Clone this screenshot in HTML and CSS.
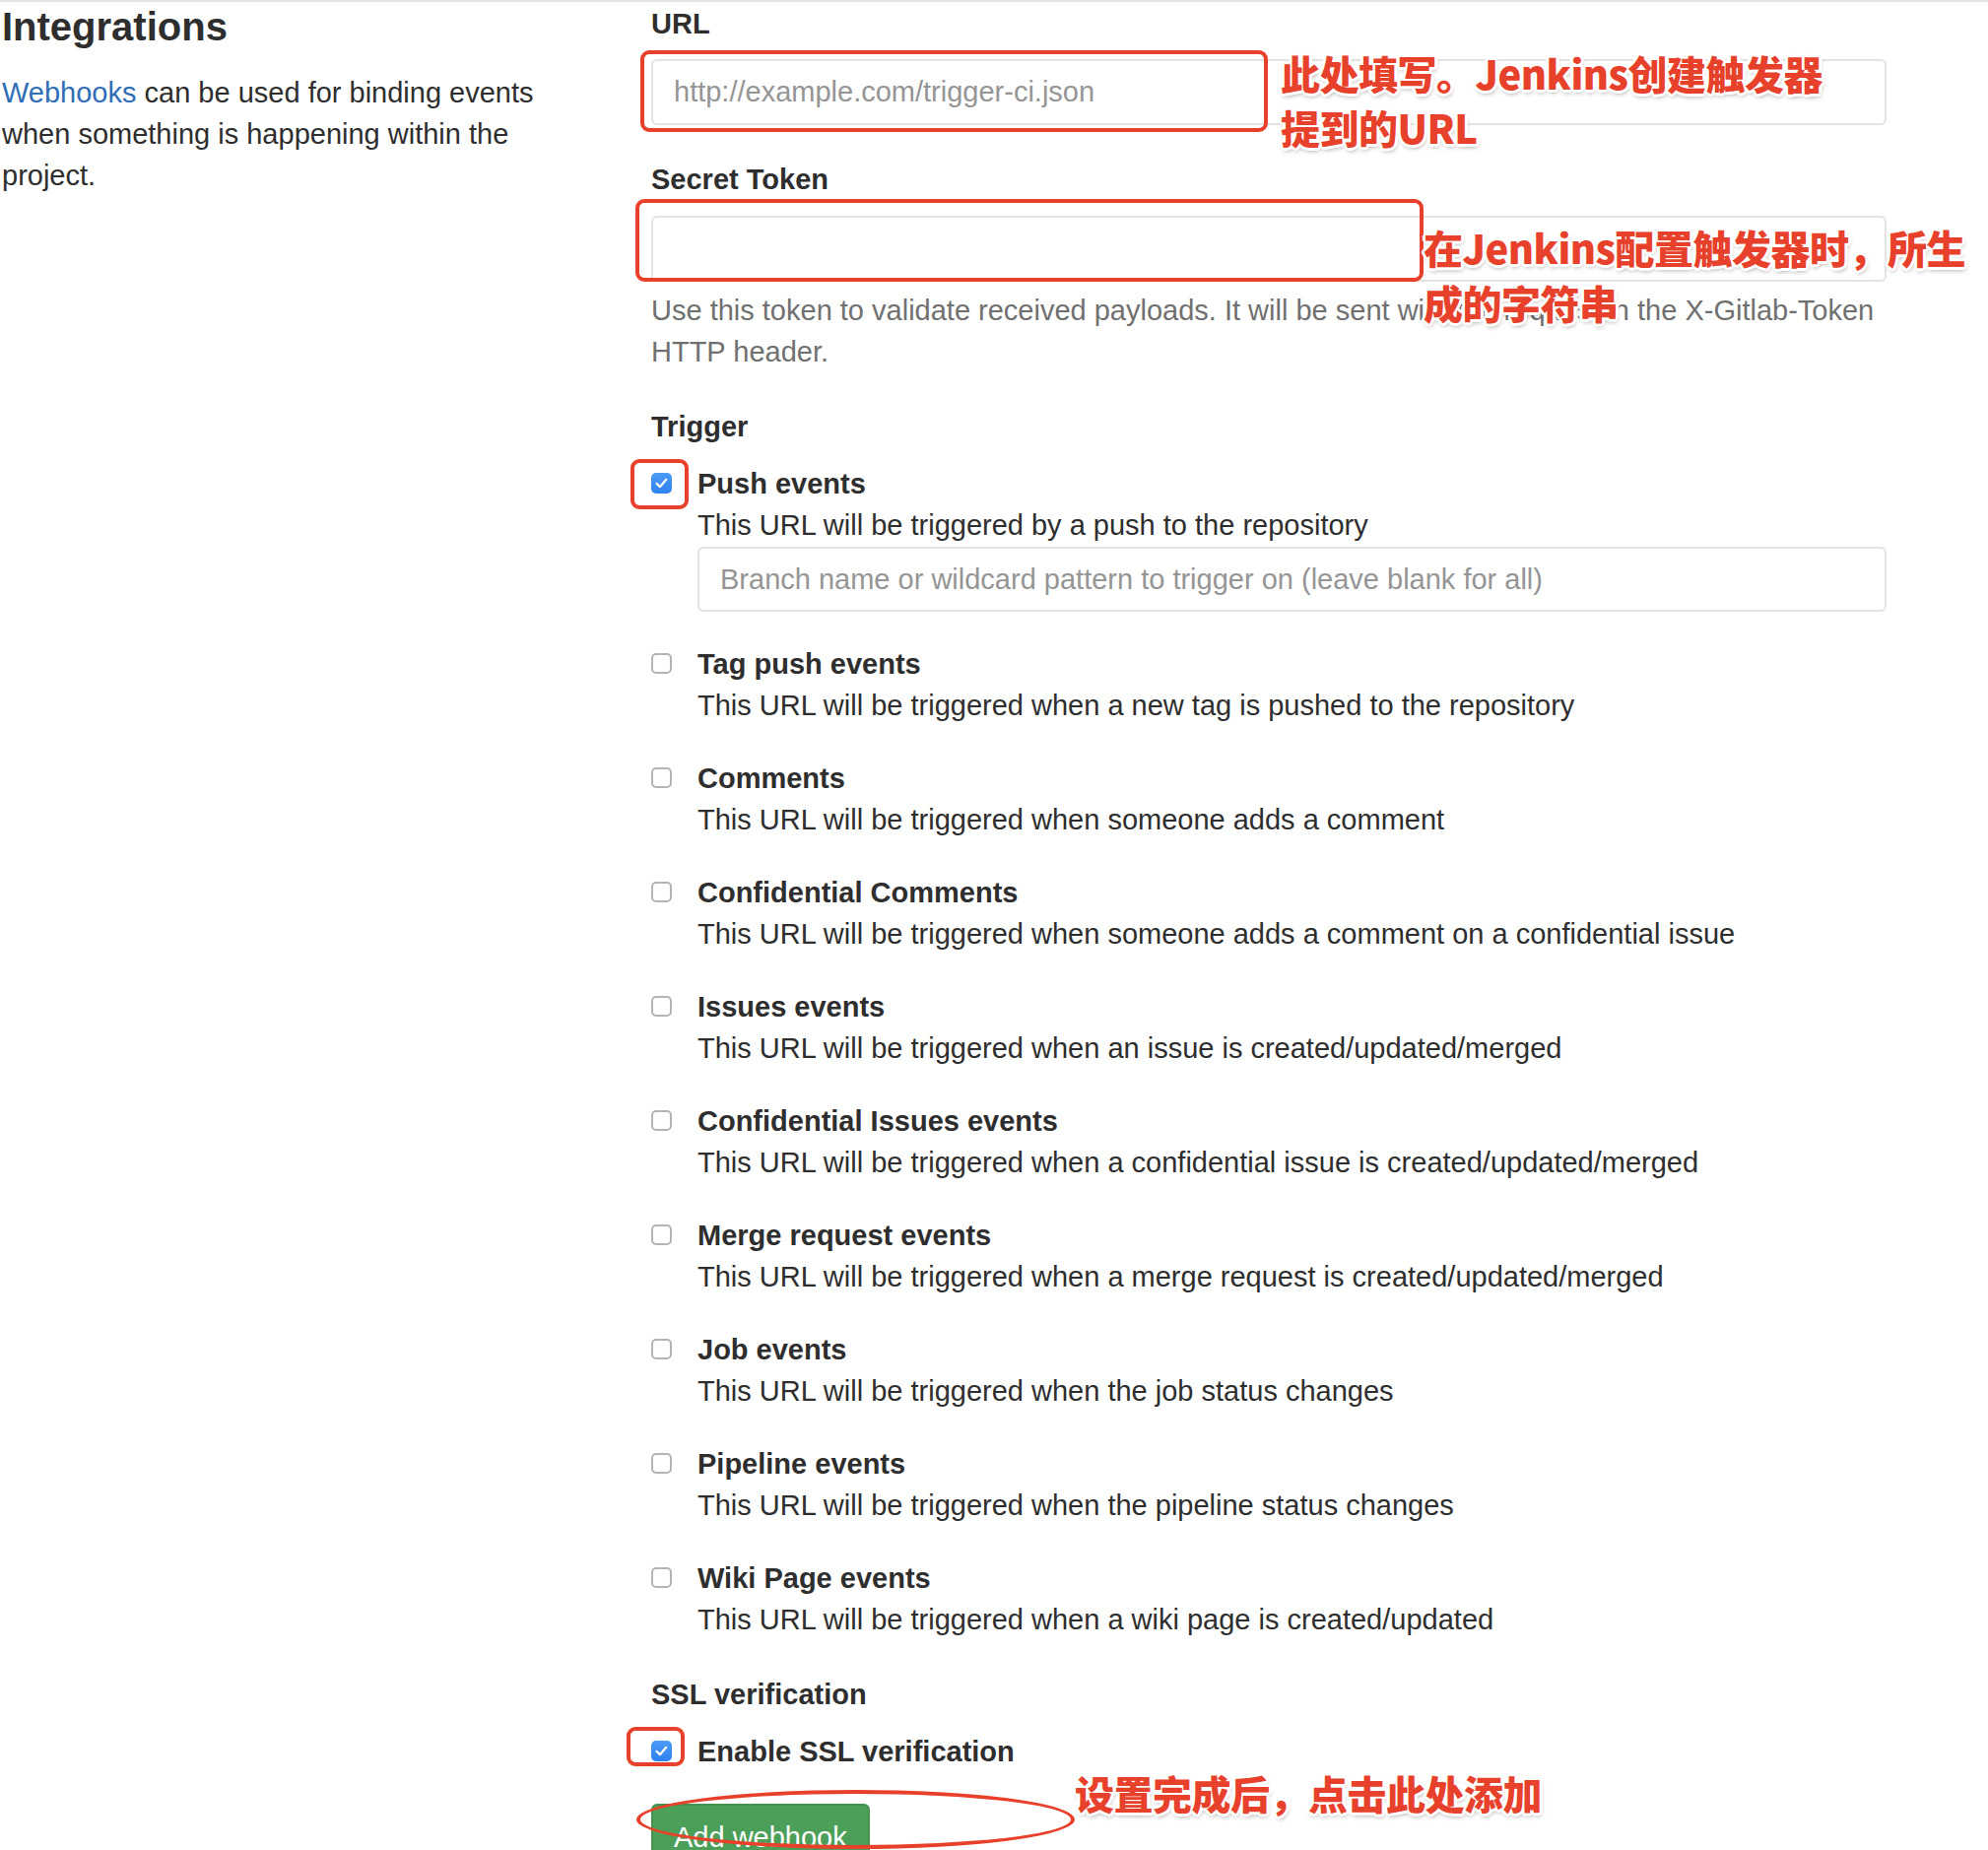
FILE: index.html
```html
<!DOCTYPE html>
<html lang="zh-CN">
<head>
<meta charset="utf-8">
<title>Integrations - Webhooks</title>
<link rel="stylesheet" href="styles.css">
</head>
<body>
<div class="screen">
  <div class="top-rule"></div>
  <div class="page">
    <aside class="intro">
      <h4 class="intro-title">Integrations</h4>
      <p class="intro-text"><a class="link" href="#">Webhooks</a> can be used for binding events when something is happening within the project.</p>
    </aside>

    <form class="hook-form">
      <div class="field">
        <label class="field-label">URL</label>
        <input class="text-input" type="text" placeholder="http://example.com/trigger-ci.json">
      </div>

      <div class="field field-token">
        <label class="field-label">Secret Token</label>
        <input class="text-input" type="text">
        <p class="help-text">Use this token to validate received payloads. It will be sent with the request in the X-Gitlab-Token<br>HTTP header.</p>
      </div>

      <div class="field field-trigger">
        <label class="field-label">Trigger</label>
        <ul class="event-list">
          <li class="event">
            <span class="checkbox checked"><svg viewBox="0 0 21 21"><path d="M5.6 10.8l3.3 3.4 6.3-7.4" /></svg></span>
            <div class="event-body">
              <div class="event-title">Push events</div>
              <div class="event-desc">This URL will be triggered by a push to the repository</div>
              <input class="text-input branch-input" type="text" placeholder="Branch name or wildcard pattern to trigger on (leave blank for all)">
            </div>
          </li>
          <li class="event">
            <span class="checkbox"></span>
            <div class="event-body">
              <div class="event-title">Tag push events</div>
              <div class="event-desc">This URL will be triggered when a new tag is pushed to the repository</div>
            </div>
          </li>
          <li class="event">
            <span class="checkbox"></span>
            <div class="event-body">
              <div class="event-title">Comments</div>
              <div class="event-desc">This URL will be triggered when someone adds a comment</div>
            </div>
          </li>
          <li class="event">
            <span class="checkbox"></span>
            <div class="event-body">
              <div class="event-title">Confidential Comments</div>
              <div class="event-desc">This URL will be triggered when someone adds a comment on a confidential issue</div>
            </div>
          </li>
          <li class="event">
            <span class="checkbox"></span>
            <div class="event-body">
              <div class="event-title">Issues events</div>
              <div class="event-desc">This URL will be triggered when an issue is created/updated/merged</div>
            </div>
          </li>
          <li class="event">
            <span class="checkbox"></span>
            <div class="event-body">
              <div class="event-title">Confidential Issues events</div>
              <div class="event-desc">This URL will be triggered when a confidential issue is created/updated/merged</div>
            </div>
          </li>
          <li class="event">
            <span class="checkbox"></span>
            <div class="event-body">
              <div class="event-title">Merge request events</div>
              <div class="event-desc">This URL will be triggered when a merge request is created/updated/merged</div>
            </div>
          </li>
          <li class="event">
            <span class="checkbox"></span>
            <div class="event-body">
              <div class="event-title">Job events</div>
              <div class="event-desc">This URL will be triggered when the job status changes</div>
            </div>
          </li>
          <li class="event">
            <span class="checkbox"></span>
            <div class="event-body">
              <div class="event-title">Pipeline events</div>
              <div class="event-desc">This URL will be triggered when the pipeline status changes</div>
            </div>
          </li>
          <li class="event">
            <span class="checkbox"></span>
            <div class="event-body">
              <div class="event-title">Wiki Page events</div>
              <div class="event-desc">This URL will be triggered when a wiki page is created/updated</div>
            </div>
          </li>
        </ul>
      </div>

      <div class="field field-ssl">
        <label class="field-label">SSL verification</label>
        <div class="event">
          <span class="checkbox checked"><svg viewBox="0 0 21 21"><path d="M5.6 10.8l3.3 3.4 6.3-7.4" /></svg></span>
          <div class="event-body">
            <div class="event-title">Enable SSL verification</div>
          </div>
        </div>
      </div>

      <button class="btn-create" type="button">Add webhook</button>
    </form>
  </div>

  <!-- annotation overlay -->
  <div class="mark mark-url"></div>
  <div class="mark mark-token"></div>
  <div class="mark mark-push"></div>
  <div class="mark mark-ssl"></div>
  <div class="mark-ellipse"></div>
  <div class="note note-url">此处填写。Jenkins创建触发器<br>提到的URL</div>
  <div class="note note-token">在Jenkins配置触发器时，所生<br>成的字符串</div>
  <div class="note note-add">设置完成后，点击此处添加</div>
</div>
</body>
</html>
```

FILE: styles.css
```css
html, body {
  margin: 0;
  padding: 0;
  background: #ffffff;
}

body {
  font-family: "Liberation Sans", Arial, Helvetica, sans-serif;
  font-size: 29px;
  line-height: 42px;
  color: #2e2e2e;
  overflow: hidden;
}

.screen {
  position: relative;
  width: 2018px;
  height: 1878px;
  overflow: hidden;
}

.top-rule {
  height: 2px;
  background: #e4e4e4;
}

.page {
  display: grid;
  grid-template-columns: 661px 1254px;
}

/* left column */
.intro {
  padding-left: 2px;
}

.intro-title {
  margin: 0;
  padding-top: 2px;
  font-size: 40px;
  line-height: 46px;
  font-weight: 700;
  color: #2e2e2e;
}

.intro-text {
  margin: 23px 0 0;
  max-width: 585px;
}

.link {
  color: #2f6db5;
  text-decoration: none;
}

/* right column */
.hook-form {
  padding-top: 1px;
  margin: 0;
}

.field {
  margin-bottom: 34px;
}

.field-label {
  display: block;
  font-weight: 700;
  margin-bottom: 15px;
}

.field-token .field-label {
  margin-bottom: 16px;
}

.text-input {
  display: block;
  box-sizing: border-box;
  width: 100%;
  height: 67px;
  margin: 0;
  padding: 0 21px;
  border: 2px solid #e3e3e3;
  border-radius: 6px;
  background: #fff;
  font-family: inherit;
  font-size: 29px;
  color: #2e2e2e;
  outline: none;
}

.text-input::placeholder {
  color: #959595;
}

.help-text {
  margin: 8px 0 0;
  color: #707070;
}

.field-trigger .field-label,
.field-ssl .field-label {
  margin-bottom: 16px;
}

.event-list {
  list-style: none;
  margin: 0;
  padding: 0;
  display: flex;
  flex-direction: column;
  gap: 32px;
}

.event {
  display: grid;
  grid-template-columns: 47px 1fr;
  align-items: start;
}

.checkbox {
  box-sizing: border-box;
  width: 21px;
  height: 21px;
  margin-top: 10px;
  border: 2px solid #b4b4b4;
  border-radius: 5px;
  background: #fff;
  display: block;
}

.checkbox.checked {
  border: none;
  background: linear-gradient(#4c9bf7, #2f82ee);
}

.checkbox svg {
  display: block;
  width: 21px;
  height: 21px;
}

.checkbox svg path {
  fill: none;
  stroke: #ffffff;
  stroke-width: 2.2;
  stroke-linecap: round;
  stroke-linejoin: round;
}

.event-title {
  font-weight: 700;
}

.branch-input {
  margin-top: 1px;
  height: 66px;
}

.field-ssl {
  margin-top: 32px;
  margin-bottom: 32px;
}

.btn-create {
  display: block;
  height: 68px;
  padding: 0 21px;
  border: 2px solid #43914e;
  border-radius: 6px;
  background: #4c9f58;
  color: #ffffff;
  font-family: inherit;
  font-size: 29px;
}

/* annotations drawn over the screenshot */
.mark {
  position: absolute;
  box-sizing: border-box;
  border: 4px solid #e8412b;
  border-radius: 9px;
}

.mark-url   { left: 650px; top: 51px;   width: 637px; height: 83px; }
.mark-token { left: 645px; top: 202px;  width: 800px; height: 84px; }
.mark-push  { left: 640px; top: 466px;  width: 59px;  height: 51px; }
.mark-ssl   { left: 636px; top: 1753px; width: 59px;  height: 40px; }

.mark-ellipse {
  position: absolute;
  box-sizing: border-box;
  left: 646px;
  top: 1817px;
  width: 445px;
  height: 60px;
  border: 4px solid #e8412b;
  border-radius: 50%;
}

.note {
  position: absolute;
  font-family: "Noto Sans CJK SC", "Liberation Sans", sans-serif;
  font-weight: 900;
  font-size: 40px;
  line-height: 55px;
  letter-spacing: -0.5px;
  color: #e8412b;
  white-space: nowrap;
  text-shadow:
    -2px -2px 0 #fff, 2px -2px 0 #fff, -2px 2px 0 #fff, 2px 2px 0 #fff,
    0 -3px 0 #fff, 0 3px 0 #fff, -3px 0 0 #fff, 3px 0 0 #fff,
    1px 3px 5px rgba(0, 0, 0, 0.4);
}

.note-url   { left: 1300px; top: 47px; }
.note-token { left: 1445px; top: 223px; line-height: 56px; }
.note-add   { left: 1091px; top: 1793px; }
```
